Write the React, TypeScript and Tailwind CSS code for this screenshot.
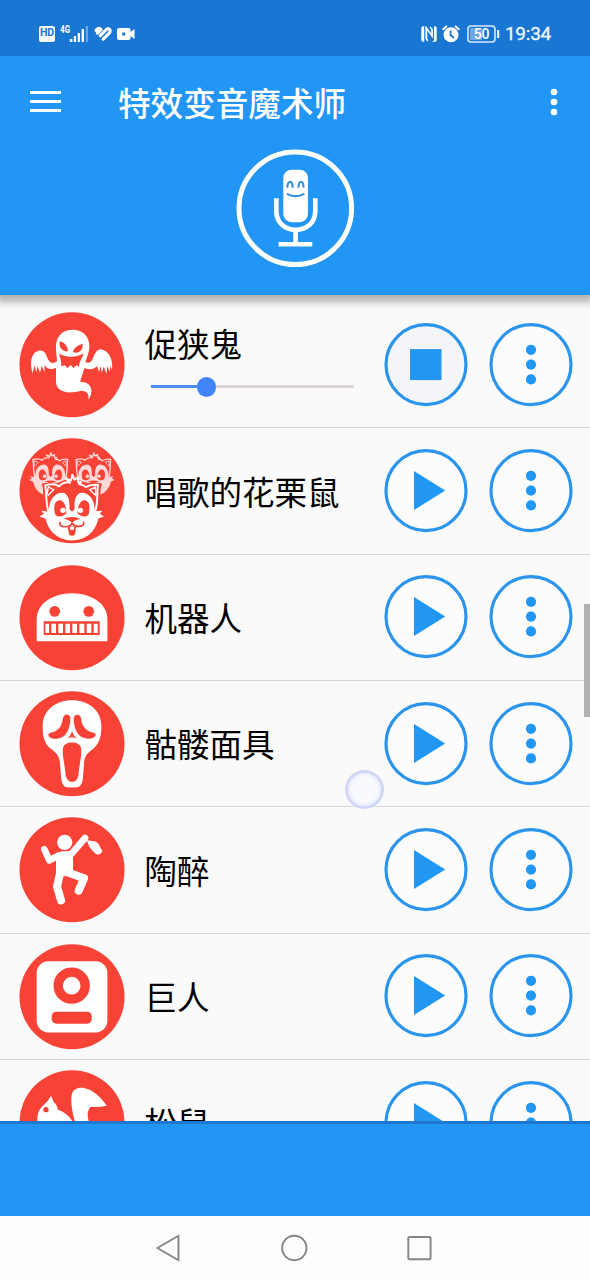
import React from "react";

const RED = "#f94236";
const BLUE = "#2196f3";

type AvatarProps = { viewBox: string; cy: number; children: React.ReactNode };

function Avatar({ viewBox, cy, children }: AvatarProps) {
  return (
    <svg viewBox={viewBox} className="h-[105.4px] w-[105.4px] shrink-0 overflow-visible">
      <g transform="translate(-2 0)">
        <circle cx="217" cy={cy} r="157.5" fill={RED} />
        {children}
      </g>
    </svg>
  );
}

function Ghost() {
  return (
    <Avatar viewBox="59 36 316 316" cy={194}>
      <path
        fill="#fff"
        d="M169 150C166 113 184 90 217 89C252 89 270 111 269 141C268 157 262 171 257 186C267 192 275 186 279 177C285 159 293 148 303 148C325 151 341 175 337 210L331 197L331 216L323 199L320 221L312 200L306 218L303 198L298 215L292 198C286 207 270 211 254 204C250 220 243 234 242 246C259 243 276 255 275 273C275 284 272 292 266 298C269 279 260 273 244 272C233 276 222 277 207 277C181 275 169 264 169 243L169 203C154 211 141 206 135 195L134 216L126 197L121 219L114 198L110 217L105 195L99 220C91 195 92 170 107 157C119 148 131 150 137 160C144 174 146 188 160 190L172 184Z"
      />
      <path
        fill={RED}
        d="M180 124C195 127 204 139 205 153C194 158 176 146 180 124ZM249 132C233 135 221 146 220 156C232 163 251 153 249 132ZM175 156C193 172 232 174 254 157C246 177 238 185 238 202L231 195L221 204L213 195L203 205L196 196L185 199C185 181 181 168 175 156Z"
      />
      <path fill="none" stroke="#fff" strokeWidth="5" d="M174 155Q214 180 254 156" />
    </Avatar>
  );
}

function ChipmunkFace({ muted = false }: { muted?: boolean }) {
  const tint = muted ? "#ffd9d8" : "#fff";
  return (
    <g>
      <path
        fill={RED}
        stroke={tint}
        strokeWidth="6"
        strokeLinejoin="round"
        d="M118 251C107 225 112 199 107 168Q134 160 148 171Q164 155 181 160L169 148L184 153L188 136L194 151L205 145L205 158L214 158L208 164Q220 166 228 173Q244 163 265 167C260 195 267 227 254 250"
      />
      <path fill="none" stroke={tint} strokeWidth="4" d="M112 196L116 173L132 181L114 199M259 196L257 173L240 181L259 199" />
      <path
        fill={tint}
        d="M119 230C121 208 138 190 157 190C175 191 181 210 179 239L187 247L195 239C192 210 200 191 217 190C237 191 251 208 254 230L255 246L278 244L270 253L283 261L266 267C257 309 227 332 187 333C144 332 116 307 108 268L89 261L103 254L95 244L117 247Z"
      />
      <path
        fill={RED}
        d="M136 254C129 224 139 213 151 213C164 215 169 232 170 251C162 263 143 266 136 254ZM237 254C244 224 235 213 223 213C210 215 205 232 203 251C211 263 231 266 237 254Z"
      />
      <circle cx="160" cy="243" r="8" fill={tint} />
      <circle cx="212" cy="243" r="8" fill={tint} />
      <path
        fill="none"
        stroke={RED}
        strokeWidth="5"
        strokeLinecap="round"
        d="M150 279Q150 292 166 292Q181 292 187 282Q195 292 210 291Q224 290 222 279"
      />
      <path fill={RED} d="M160 269Q174 263 187 263Q200 263 213 269Q198 270 187 280Q176 270 160 269ZM174 291L199 291L196 315Q187 323 178 315Z" />
      <path fill={tint} d="M181 293H193V301H181Z" />
    </g>
  );
}

function Chipmunks() {
  return (
    <Avatar viewBox="59 26 316 316" cy={184}>
      <g transform="translate(30 0)">
        <g transform="translate(-1 -20) scale(0.66)">
          <ChipmunkFace muted />
        </g>
        <g transform="translate(128 -20) scale(0.66)">
          <ChipmunkFace muted />
        </g>
        <path
          fill={RED}
          d="M99 162L145 160L165 152L187 132L208 152L230 160L275 162L271 205L262 250L187 305L112 250L101 205Z"
        />
        <ChipmunkFace />
      </g>
    </Avatar>
  );
}

function Robot() {
  return (
    <Avatar viewBox="59 26 316 316" cy={184}>
      <g transform="translate(30 0)">
        <path fill="#fff" d="M81 255V187C82 144 125 112 187 111C249 112 292 144 293 187V255Z" />
        <circle cx="135" cy="165" r="16" fill={RED} />
        <circle cx="237" cy="165" r="16" fill={RED} />
        <path fill={RED} d="M102 195H270V236H102Z" />
        <path
          fill="#fff"
          d="M107 202H118V230H107ZM125 202H139V230H125ZM146 202H160V230H146ZM167 202H181V230H167ZM188 202H202V230H188ZM209 202H224V230H209ZM231 202H245V230H231ZM252 202H264V230H252Z"
        />
      </g>
    </Avatar>
  );
}

function SkullMask() {
  return (
    <Avatar viewBox="59 22 316 316" cy={180}>
      <g transform="translate(30 0)">
        <path
          fill="#fff"
          d="M187 50C236 50 274 79 275 126C275 167 265 186 242 202C223 216 223 233 222 255L219 288Q216 311 197 311H177Q158 311 155 288L152 255C151 233 150 216 132 202C108 186 98 167 99 126C100 79 138 50 187 50Z"
        />
        <path
          fill={RED}
          d="M160 103C162 89 181 89 182 103C182 124 176 145 163 157C147 169 118 168 116 155C116 144 129 149 143 138C158 126 157 113 160 103ZM192 103C194 89 212 90 214 103C216 117 218 128 232 139C245 149 259 144 258 155C254 168 228 168 212 158C197 145 192 124 192 103ZM187 143Q191 157 201 165L190 161H184L174 165Q184 155 187 143ZM160 193C163 171 211 171 214 193C217 216 209 240 207 267C206 304 169 304 167 267C165 239 157 217 160 193Z"
        />
      </g>
    </Avatar>
  );
}

function Drunk() {
  return (
    <Avatar viewBox="59 23 316 316" cy={181}>
      <g transform="translate(30 0)">
        <circle cx="165" cy="99" r="23" fill="#fff" />
        <path
          fill="none"
          stroke="#fff"
          strokeWidth="20"
          strokeLinecap="round"
          strokeLinejoin="round"
          d="M104 120L119 153L151 137L184 135L226 86"
        />
        <path fill="#fff" d="M139 131Q158 124 190 126L190 183L199 196L145 203L139 196Z" />
        <path
          fill="none"
          stroke="#fff"
          strokeWidth="24"
          strokeLinecap="round"
          strokeLinejoin="round"
          d="M151 191L142 232L154 273M177 190L223 207L207 244"
        />
        <path
          fill="#fff"
          d="M231 93L254 96Q264 99 268 106L278 126Q276 134 266 136Q257 135 249 125L239 112Z"
        />
      </g>
    </Avatar>
  );
}

function Giant() {
  return (
    <Avatar viewBox="59 24 316 316" cy={182}>
      <g transform="translate(30 0)">
        <rect x="81" y="76" width="212" height="213" rx="35" fill="#fff" />
        <circle cx="186" cy="149" r="40.5" fill="none" stroke={RED} strokeWidth="28" />
        <rect x="126" y="227" width="120" height="36" rx="14" fill={RED} />
      </g>
    </Avatar>
  );
}

function Squirrel() {
  return (
    <Avatar viewBox="59 61 316 316" cy={219}>
      <path
        fill="#fff"
        d="M114 220C110 195 119 176 133 165L144 154L154 138L162 157Q171 164 175 180Q202 190 215 210L230 231C217 190 212 154 216 135C222 113 244 110 266 119C288 128 307 148 321 168Q297 173 273 171Q257 188 269 220L250 300H140Z"
      />
      <circle cx="139" cy="180" r="8" fill={RED} />
    </Avatar>
  );
}

function CircleButton({ kind }: { kind: "play" | "stop" | "more" }) {
  return (
    <button aria-label={kind} className="h-[84px] w-[84px] shrink-0">
      <svg viewBox="-42 -41.6 84 84" className="h-full w-full" fill={BLUE}>
        <circle r="40" fill={kind === "stop" ? "#f4f5f8" : "#fcfcfd"} stroke="#2b94ec" strokeWidth="3.2" />
        {kind === "play" && <path d="M-12 -19.5L19.2 0L-12 19.5Z" />}
        {kind === "stop" && <path d="M-16 -15.5H15.5V15.5H-16Z" />}
        {kind === "more" && (
          <>
            <circle cy="-14.8" r="5.1" />
            <circle r="5.1" />
            <circle cy="14.8" r="5.1" />
          </>
        )}
      </svg>
    </button>
  );
}

const voices = [
  { name: "促狭鬼", Icon: Ghost, playing: true },
  { name: "唱歌的花栗鼠", Icon: Chipmunks, playing: false },
  { name: "机器人", Icon: Robot, playing: false },
  { name: "骷髅面具", Icon: SkullMask, playing: false },
  { name: "陶醉", Icon: Drunk, playing: false },
  { name: "巨人", Icon: Giant, playing: false },
  { name: "松鼠", Icon: Squirrel, playing: false },
];

function StatusBar() {
  return (
    <div className="relative z-20 flex h-14 shrink-0 items-end justify-between bg-[#1976d2] pr-[39px] pb-[10.4px] pl-[39px] text-white">
      <div className="flex h-6 items-center">
        <span className="flex h-4 w-4 items-center justify-center rounded-[2px] bg-[#f3f8ff] font-['Roboto'] text-[10.5px] leading-none font-bold text-[#1976d2]">
          HD
        </span>
        <svg viewBox="0 0 28 20" className="ml-[5px] h-5 w-7" fill="#fff">
          <text x="0.3" y="9" fontFamily="Roboto" fontSize="10" fontWeight="700" textLength="9.7" lengthAdjust="spacingAndGlyphs">
            4G
          </text>
          <path d="M9.8 15H12.4V18H9.8ZM13.8 12H16.1V18H13.8ZM17.7 9H20V18H17.7ZM21.6 5H24V18H21.6Z" />
          <path opacity=".35" d="M25.8 2H28V18H25.8Z" />
        </svg>
        <svg viewBox="0 0 18 16" className="ml-[6px] h-4 w-[18px]" fill="none" stroke="#fff" strokeLinecap="round">
          <path
            strokeWidth="3.1"
            d="M2 4.4Q3.8 1 7 3.4M3.4 7.2L6.2 4.4M6.3 9.6L12.4 3.5Q14.6 1.8 15.8 3.6Q16.8 5.5 15 7.4L9.2 13.2"
          />
        </svg>
        <svg viewBox="0 0 18 14" className="ml-[5px] h-[14px] w-[18px]" fill="#fff">
          <path fillRule="evenodd" d="M2 1H12Q13.5 1 13.5 3V5L17.5 2V12L13.5 9V11Q13.5 13 12 13H2Q0 13 0 11V3Q0 1 2 1ZM5.2 5.5V8.5H8.2V5.5Z" />
        </svg>
      </div>
      <div className="flex h-6 items-center">
        <svg viewBox="0 0 16 16" className="h-4 w-4" fill="#fff">
          <path d="M5 0L10.2 7.5V3.5L8.5 1.2L9.5 .6L11.9 3.2V12.5L6.2 4.6V12.4L7.4 14.6L6.4 15.6L4.4 13V0ZM2 .2H3.2V15.8H2Q.3 15.8 .3 14V2Q.3 .2 2 .2ZM13 .2H14Q15.7 .2 15.7 2V14Q15.7 15.8 14 15.8H10.8L13 14.5Z" />
        </svg>
        <svg viewBox="0 0 18 18" className="ml-[5.5px] h-[18px] w-[18px]">
          <circle cx="9" cy="9.7" r="7.5" fill="#fff" />
          <path d="M1.2 4.2L4.3 1.4M16.8 4.2L13.7 1.4" stroke="#fff" strokeWidth="2" strokeLinecap="round" />
          <path d="M8.6 5.5V10L11.8 13" stroke="#1976d2" strokeWidth="1.8" fill="none" />
        </svg>
        <svg viewBox="0 0 33 18" className="ml-[6.5px] h-[18px] w-[33px]">
          <rect x="1" y="1" width="27" height="16" rx="3" fill="none" stroke="#d8eaff" strokeWidth="1.6" />
          <rect x="3" y="3" width="12" height="12" rx="1" fill="#6fa9e5" />
          <path d="M31.2 5V13" stroke="#fff" strokeWidth="2" />
          <text x="14.6" y="13.9" textAnchor="middle" fontFamily="Roboto" fontSize="14" fontWeight="500" fill="#fff">
            50
          </text>
        </svg>
        <span className="ml-[5px] font-['Roboto'] text-[19px] leading-6 tracking-[-0.25px] text-[#f1f7ff] [-webkit-text-stroke:0.3px_#f1f7ff]">
          19:34
        </span>
      </div>
    </div>
  );
}

function Header() {
  return (
    <header className="relative z-10 h-[239px] shrink-0 bg-[#2196f5] shadow-[0_3px_8px_4px_rgba(0,0,0,0.3)]">
      <div className="flex h-[92px] items-center pr-[31px] pl-[30.4px]">
        <button aria-label="menu" className="flex w-[31px] flex-col gap-[6px] pb-px">
          <span className="h-[3px] bg-white" />
          <span className="h-[3px] bg-white" />
          <span className="h-[3px] bg-white" />
        </button>
        <h1 className="ml-[56.6px] flex-1 text-[32.6px] leading-[40px] font-medium text-white">特效变音魔术师</h1>
        <svg viewBox="0 0 10 30" className="h-[30px] w-[10px]" fill="#fff">
          <circle cx="5" cy="5" r="3.3" />
          <circle cx="5" cy="15" r="3.3" />
          <circle cx="5" cy="25" r="3.3" />
        </svg>
      </div>
      <div className="flex justify-center pt-px">
        <svg viewBox="107 27 356 356" className="h-[118.6px] w-[118.6px]" fill="none">
          <circle cx="285" cy="205" r="169" stroke="#fff" strokeWidth="15" />
          <rect x="249" y="89" width="74" height="158" rx="25" fill="#fff" />
          <path d="M228 175V215C229 248 253 269 286 270C320 269 344 248 345 215V175M286 270V310M235 313H336" stroke="#fff" strokeWidth="14" />
          <path
            d="M261 143Q262 125 270 125Q276 125 277 143M294 143Q296 125 302 125Q309 125 310 143M260 162Q286 176 312 162"
            stroke="#278bdd"
            strokeWidth="6"
          />
        </svg>
      </div>
    </header>
  );
}

function Slider() {
  return (
    <div className="mt-[16px] ml-[6.5px] flex h-5 w-[203px] items-center">
      <span className="h-[3px] w-[45.5px] bg-[#4c8df0]" />
      <span className="h-[19.5px] w-[19.5px] shrink-0 rounded-full bg-[#4285fa]" />
      <span className="h-[3px] flex-1 bg-[#dcd7d5]" />
    </div>
  );
}

export default function App() {
  return (
    <div className="relative flex h-[1280px] w-[590px] flex-col overflow-hidden bg-[#fafafa] font-['Noto_Sans_CJK_SC',sans-serif]">
      <StatusBar />
      <Header />
      <main className="flex-1 overflow-hidden bg-[#fafafb] pt-[7.1px]">
        {voices.map(({ name, Icon, playing }) => (
          <div key={name} className="flex h-[126.35px] items-center border-b-[1.5px] border-[#d8d8d8] pr-[17px] pl-[19.8px]">
            <Icon />
            <div className="ml-[19.4px] flex-1">
              {playing ? (
                <div className="pb-[8px]">
                  <div className="text-[32.5px] leading-[36px] whitespace-nowrap text-black">{name}</div>
                  <Slider />
                </div>
              ) : (
                <div className="pb-px text-[32.5px] leading-[40px] whitespace-nowrap text-black">{name}</div>
              )}
            </div>
            <div className="flex gap-[21px]">
              <CircleButton kind={playing ? "stop" : "play"} />
              <CircleButton kind="more" />
            </div>
          </div>
        ))}
      </main>
      <div className="z-10 h-[95px] shrink-0 border-t-[3px] border-[#1f78cf] bg-[#2196f5]" />
      <nav className="flex h-16 shrink-0 items-center justify-center bg-[#fdfdfd] pl-[2px]">
        <svg viewBox="0 0 290 30" className="h-[30px] w-[290px]" fill="none" stroke="#858585" strokeWidth="1.9" strokeLinejoin="round">
          <path d="M6.3 15L27.5 2.8V27.2Z" />
          <circle cx="143.3" cy="15" r="12.2" />
          <rect x="257.3" y="4" width="22.3" height="22.3" rx="1" />
        </svg>
      </nav>
      <div className="absolute top-[604px] right-0 h-[113px] w-[6.5px] bg-[#b1b1b1]" />
      <div className="absolute top-[770px] left-[345px] h-[39px] w-[39px] rounded-full border-[3px] border-[#d0d7f6] bg-[#f8f9ff]/90 shadow-[inset_0_0_5px_#d8dffc]" />
    </div>
  );
}
